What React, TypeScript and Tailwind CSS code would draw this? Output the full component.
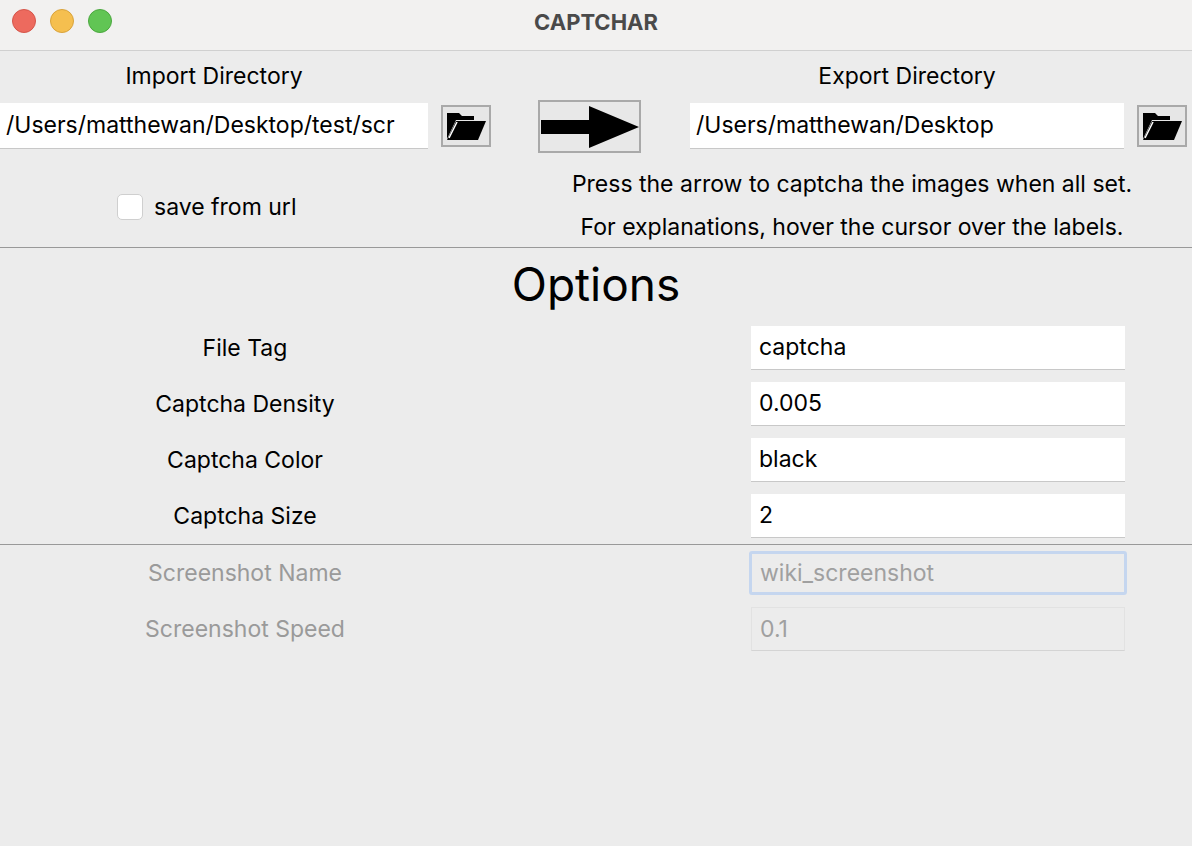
const Folder = () => (
  <svg width="44" height="34" viewBox="0 0 44 34">
    <path d="M3 4 h12 l3 3 h12 v4 H12 L3 30 Z" fill="#000" />
    <path d="M12 12 H42 L34 31 H3 Z" fill="#000" />
    <path d="M5 29 L13 13" stroke="#fff" strokeWidth="1.5" />
  </svg>
);
const FolderBtn = () => (
  <div className="w-[50px] h-[42px] border-2 border-[#a9a9a9] bg-[#e6e6e6] flex items-center justify-center">
    <Folder />
  </div>
);
const Row = ({ label, value, disabled, focus }: { label: string; value: string; disabled?: boolean; focus?: boolean }) => (
  <div className="flex items-center h-[56px]">
    <div className={`w-[490px] text-center text-[23px] ${disabled ? "text-[#9a9a9a]" : "text-black"}`}>{label}</div>
    <div className="ml-[261px] w-[374px]">
      <div
        className={`h-[44px] flex items-center px-[8px] text-[23px] ${
          disabled
            ? focus
              ? "bg-[#ececec] text-[#a0a0a0] border-[3px] border-[#c5d6ef] rounded-[3px] -mx-[2px]"
              : "bg-[#ececec] text-[#a0a0a0] border border-[#e2e2e2] border-b-[#d4d4d4]"
            : "bg-white text-black border-b border-[#c8c8c8]"
        }`}
      >
        {value}
      </div>
    </div>
  </div>
);
export default function App() {
  return (
    <div className="w-[1192px] h-[846px] bg-[#ececec] flex flex-col" style={{ fontFamily: "Inter, 'Noto Sans', sans-serif" }}>
      <div className="h-[51px] bg-[#f2f1f0] border-b border-[#d0d0d0] flex items-center relative shrink-0">
        <div className="flex gap-[14px] pl-[12px] -mt-[8px]">
          <div className="w-[24px] h-[24px] rounded-full bg-[#ed6a5e] border border-[#d5554a]" />
          <div className="w-[24px] h-[24px] rounded-full bg-[#f5bf4f] border border-[#d9a33b]" />
          <div className="w-[24px] h-[24px] rounded-full bg-[#61c554] border border-[#4ca83f]" />
        </div>
        <div className="absolute left-0 right-0 top-[6px] text-center text-[22px] font-bold text-[#4a4a4a] pointer-events-none">CAPTCHAR</div>
      </div>
      <div className="flex h-[197px] border-b border-[#999] shrink-0">
        <div className="w-[500px] flex flex-col">
          <div className="text-[23px] text-center w-[428px] mt-[8px] h-[32px]">Import Directory</div>
          <div className="flex items-center mt-[12px] gap-[13px]">
            <div className="w-[428px] h-[46px] bg-white border-b border-[#c8c8c8] flex items-center pl-[6px] text-[23px] overflow-hidden whitespace-nowrap">/Users/matthewan/Desktop/test/scr</div>
            <FolderBtn />
          </div>
          <div className="flex items-center mt-[41px] ml-[117px] gap-[11px]">
            <div className="w-[26px] h-[26px] bg-white border border-[#cfcfcf] rounded-[5px]" />
            <span className="text-[23px]">save from url</span>
          </div>
        </div>
        <div className="flex flex-col">
          <div className="ml-[38px] mt-[49px] w-[103px] h-[53px] border-2 border-[#a9a9a9] bg-[#e8e8e8] flex items-center justify-center">
            <svg width="98" height="42" viewBox="0 0 98 42"><path d="M0 14 H48 V0 L98 21 L48 42 V28 H0 Z" fill="#000" /></svg>
          </div>
        </div>
        <div className="flex flex-col ml-[49px]">
          <div className="text-[23px] text-center w-[434px] mt-[8px] h-[32px]">Export Directory</div>
          <div className="flex items-center mt-[12px] gap-[13px]">
            <div className="w-[434px] h-[46px] bg-white border-b border-[#c8c8c8] flex items-center pl-[6px] text-[23px]">/Users/matthewan/Desktop</div>
            <FolderBtn />
          </div>
        </div>
      </div>
      <div className="-mt-[72px] ml-[500px] w-[692px] text-center text-[23px] leading-[43px] pl-[12px] h-[0px]">
        <div className="-mt-[13px]">Press the arrow to captcha the images when all set.</div>
        <div>For explanations, hover the cursor over the labels.</div>
      </div>
      <div className="mt-[72px] text-center text-[46px] leading-[72px]">Options</div>
      <div className="border-b border-[#999]">
        <Row label="File Tag" value="captcha" />
        <Row label="Captcha Density" value="0.005" />
        <Row label="Captcha Color" value="black" />
        <Row label="Captcha Size" value="2" />
      </div>
      <div>
        <Row label="Screenshot Name" value="wiki_screenshot" disabled focus />
        <Row label="Screenshot Speed" value="0.1" disabled />
      </div>
    </div>
  );
}
